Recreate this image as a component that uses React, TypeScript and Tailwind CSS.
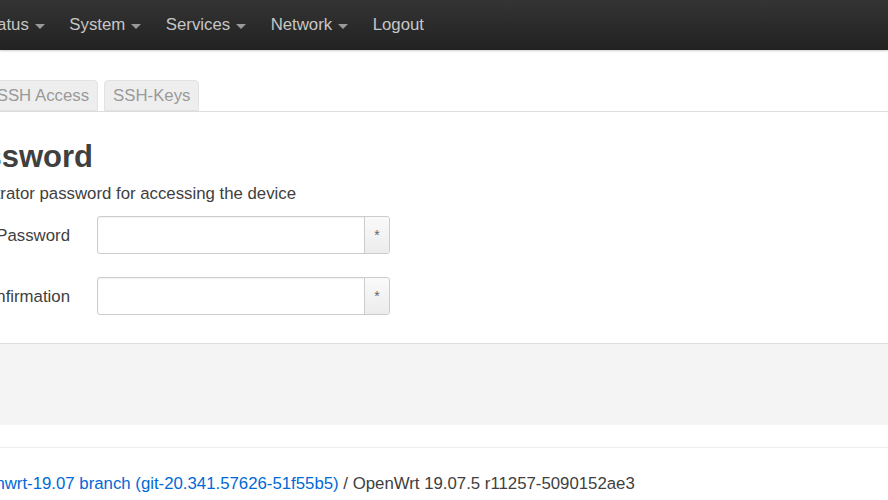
import React from 'react';

const menu = ['Status', 'System', 'Services', 'Network'];

function Caret() {
  return <span className="ml-[6px] inline-block h-0 w-0 border-x-[5px] border-t-[5px] border-x-transparent border-t-[#9a9a9a] translate-y-[1px]" />;
}

function PasswordRow({ label }: { label: string }) {
  return (
    <div className="flex items-center">
      <label className="w-[232px] shrink-0 translate-y-[1px] text-right text-[16.8px] text-[#404040]">{label}</label>
      <div className="ml-[27px] flex h-[38px] w-[293px] rounded-[3px] border border-[#ccc] bg-white shadow-[inset_0_1px_2px_rgba(0,0,0,0.06)]">
        <input type="password" className="min-w-0 flex-1 bg-transparent px-2 outline-none" />
        <span className="flex w-[25px] items-center justify-center rounded-r-[3px] border-l border-[#ccc] bg-gradient-to-b from-[#fafafa] to-[#ececec] text-[14px] text-[#666]">*</span>
      </div>
    </div>
  );
}

export default function App() {
  return (
    <div className="h-[500px] w-[888px] overflow-hidden bg-white font-['Liberation_Sans',Arial,sans-serif] text-[16.8px] text-[#404040]">
      <header className="relative h-[50px] bg-gradient-to-b from-[#343434] to-[#222] shadow-[0_1px_2px_rgba(0,0,0,0.2)]">
        <nav className="ml-[-31px] flex h-full items-center text-[#c6c6c6]">
          {menu.map((m) => (
            <a key={m} className="flex items-center px-[12.25px]">
              {m}
              <Caret />
            </a>
          ))}
          <a className="px-[12.25px]">Logout</a>
        </nav>
      </header>

      <main className="ml-[-162px]">
        <ul className="ml-[-3px] mt-[30px] flex h-[32px] gap-[6px] border-b border-[#ddd]">
          <li className="flex h-[32px] items-center rounded-t-[4px] border border-b-white border-[#ddd] bg-white px-[8px] text-[#404040]">Router Password</li>
          <li className="flex h-[31px] items-center rounded-t-[4px] border border-[#e2e2e2] bg-[#eee] px-[8px] pt-[1px] text-[#999]">SSH Access</li>
          <li className="flex h-[31px] items-center rounded-t-[4px] border border-[#e2e2e2] bg-[#eee] px-[8px] pt-[1px] text-[#999]">SSH-Keys</li>
        </ul>

        <h2 className="mt-[27px] text-[31px] font-bold leading-[36px] text-[#404040]">Router Password</h2>
        <p className="mt-[7px] leading-[24px]">Changes the administrator password for accessing the device</p>

        <div className="mt-[10px] flex flex-col gap-[23px]">
          <PasswordRow label="Password" />
          <PasswordRow label="Confirmation" />
        </div>
      </main>

      <div className="mt-[28px] h-[82px] border-t border-[#ddd] bg-[#f4f4f4]" />

      <footer className="mt-[22px] border-t border-[#eee]">
        <p className="ml-[-166px] mt-[24px] leading-[24px]">
          <a className="text-[#0069d6]">Powered by LuCI openwrt-19.07 branch (git-20.341.57626-51f55b5)</a> / OpenWrt 19.07.5 r11257-5090152ae3
        </p>
      </footer>
    </div>
  );
}
